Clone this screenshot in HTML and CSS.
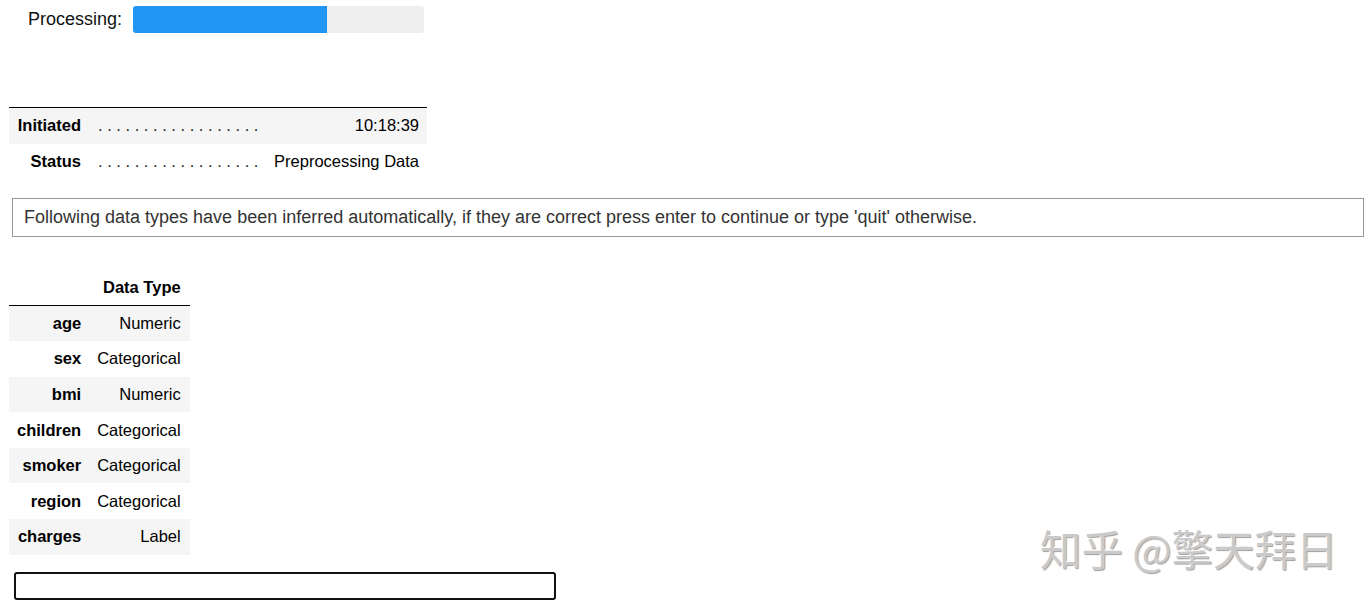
FILE: index.html
```html
<!DOCTYPE html>
<html>
<head>
<meta charset="utf-8">
<link rel="stylesheet" href="styles.css">
</head>
<body>
<div class="page">
  <div class="progress-row">
    <span class="progress-label">Processing:</span>
    <div class="progress-track"><div class="progress-fill" style="width:66.7%"></div></div>
  </div>

  <table class="status">
    <tbody>
      <tr class="odd"><th>Initiated</th><td class="dots">. . . . . . . . . . . . . . . . . .</td><td class="val">10:18:39</td></tr>
      <tr><th>Status</th><td class="dots">. . . . . . . . . . . . . . . . . .</td><td class="val">Preprocessing Data</td></tr>
    </tbody>
  </table>

  <div class="notice">Following data types have been inferred automatically, if they are correct press enter to continue or type 'quit' otherwise.</div>

  <table class="types">
    <thead>
      <tr><th></th><th>Data Type</th></tr>
    </thead>
    <tbody>
      <tr class="odd"><th>age</th><td>Numeric</td></tr>
      <tr><th>sex</th><td>Categorical</td></tr>
      <tr class="odd"><th>bmi</th><td>Numeric</td></tr>
      <tr><th>children</th><td>Categorical</td></tr>
      <tr class="odd"><th>smoker</th><td>Categorical</td></tr>
      <tr><th>region</th><td>Categorical</td></tr>
      <tr class="odd"><th>charges</th><td>Label</td></tr>
    </tbody>
  </table>

  <div class="input-box"></div>
</div>
<div class="watermark">知乎 @擎天拜日</div>
</body>
</html>
```

FILE: styles.css
```css
html, body {
  margin: 0;
  padding: 0;
  background: #fff;
}
body {
  font-family: "Liberation Sans", Arial, sans-serif;
  font-size: 16.5px;
  color: #000;
  width: 1372px;
  height: 605px;
  overflow: hidden;
  position: relative;
}
.page {
  padding: 6px 0 0 9px;
}
.progress-row {
  display: flex;
  align-items: center;
  height: 27px;
}
.progress-label {
  margin-left: 19px;
  width: 105px;
  font-size: 18px;
  color: #111;
}
.progress-track {
  width: 291px;
  height: 27px;
  background: #eeeeee;
  border-radius: 3px;
  overflow: hidden;
}
.progress-fill {
  height: 100%;
  background: #2196f3;
}
table {
  border-collapse: collapse;
  border-spacing: 0;
}
.status {
  margin-top: 74px;
  width: 418px;
  border-top: 1px solid #000;
}
.status tr {
  height: 36px;
}
.status th {
  text-align: right;
  font-weight: bold;
  padding: 0 8px;
  width: 64px;
}
.status .dots {
  text-align: left;
  padding: 0 8px 0 9px;
  color: #222;
}
.status .val {
  text-align: right;
  padding: 0 8px 0 0;
  white-space: nowrap;
}
.odd {
  background: #f5f5f5;
}
.notice {
  margin: 18px 8px 0 3px;
  height: 37px;
  border: 1px solid #999;
  display: flex;
  align-items: center;
  padding-left: 11px;
  font-size: 18px;
  color: #333;
  box-sizing: content-box;
}
.types {
  margin-top: 34px;
}
.types thead tr {
  height: 35px;
}
.types thead th {
  border-bottom: 1px solid #000;
  vertical-align: middle;
}
.types tr {
  height: 35.6px;
}
.types th {
  text-align: right;
  font-weight: bold;
  padding: 0 8px;
}
.types td, .types thead th:last-child {
  text-align: right;
  padding: 0 9px 0 8px;
}
.input-box {
  margin: 17px 0 0 5px;
  width: 538px;
  height: 24px;
  border: 2px solid #111;
  border-radius: 3px;
}
.watermark {
  position: absolute;
  left: 1040px;
  top: 520px;
  font-family: "Noto Sans CJK SC", sans-serif;
  font-size: 41.5px;
  line-height: 56px;
  color: #cacaca;
  text-shadow: -1px -1px 0 #fff, 1px 1px 1px #a0a0a0;
}
```
